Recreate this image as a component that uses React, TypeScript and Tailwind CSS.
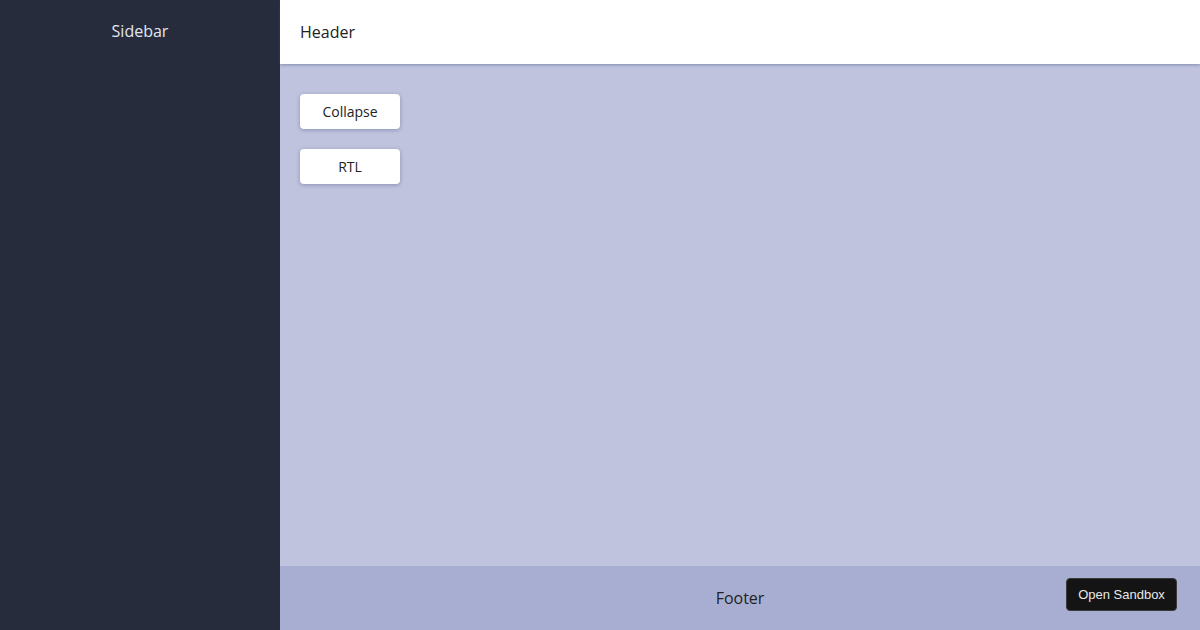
import React from 'react';

const App: React.FC = () => {
    return (
        <div className="relative flex h-[630px] w-[1200px] overflow-hidden font-['Open_Sans',sans-serif]">
            {/* sidebar */}
            <aside className="w-[280px] shrink-0 bg-[#272c3d] text-[#e3e6ee]">
                <div className="flex h-[62px] items-center justify-center text-[16px]">Sidebar</div>
            </aside>

            {/* main column */}
            <div className="flex flex-1 flex-col bg-[#bfc3de]">
                <header className="relative z-10 flex h-[64px] shrink-0 items-center bg-white px-5 text-[16px] text-[#222] shadow-[0_1px_3px_rgba(60,70,120,0.45)]">
                    Header
                </header>
                <main className="flex flex-1 flex-col gap-5 p-5 pt-[30px]">
                    <button className="h-[35px] w-[100px] rounded bg-white text-[14px] text-[#222] shadow-[0_1px_4px_rgba(60,70,120,0.4)]">
                        Collapse
                    </button>
                    <button className="h-[35px] w-[100px] rounded bg-white text-[14px] text-[#222] shadow-[0_1px_4px_rgba(60,70,120,0.4)]">
                        RTL
                    </button>
                </main>
                <footer className="flex h-[64px] shrink-0 items-center justify-center bg-[#a8aed1] text-[16px] text-[#222]">
                    Footer
                </footer>
            </div>

            <button className="absolute bottom-[19px] right-[23px] h-[33px] w-[111px] rounded-[4px] border border-[#3a3a3a] bg-[#141414] font-['Liberation_Sans',sans-serif] text-[13px] text-[#e8e8e8]">
                Open Sandbox
            </button>
        </div>
    );
};

export default App;
